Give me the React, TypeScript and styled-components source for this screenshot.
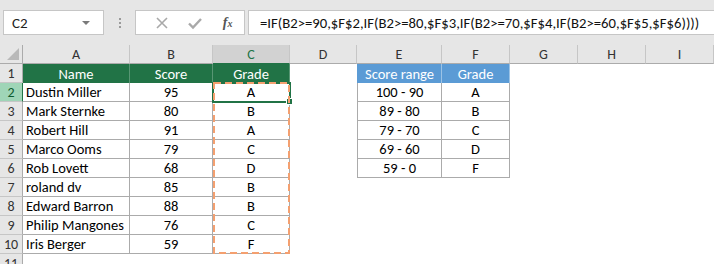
import React from 'react';
import styled, { createGlobalStyle, css } from 'styled-components';

const GlobalStyle = createGlobalStyle`
	html, body {
		margin: 0;
		padding: 0;
		background: #ffffff;
	}
	body {
		font-family: Carlito, 'Liberation Sans', Arial, sans-serif;
		overflow: hidden;
	}
`;

const XL_GREEN = '#217346';
const XL_BLUE = '#5b9bd5';
const GRID = '#ababab';
const HEAD_BG = '#e6e6e6';
const HEAD_LINE = '#c6c6c6';

const columns = [
	{ key: 'A', width: 107 },
	{ key: 'B', width: 83 },
	{ key: 'C', width: 77 },
	{ key: 'D', width: 67 },
	{ key: 'E', width: 85 },
	{ key: 'F', width: 68 },
	{ key: 'G', width: 68 },
	{ key: 'H', width: 68 },
	{ key: 'I', width: 68 },
];
const ROW_HEAD_W = 23;
const ROW_H = 19;

const people: [string, number, string][] = [
	['Dustin Miller', 95, 'A'],
	['Mark Sternke', 80, 'B'],
	['Robert Hill', 91, 'A'],
	['Marco Ooms', 79, 'C'],
	['Rob Lovett', 68, 'D'],
	['roland dv', 85, 'B'],
	['Edward Barron', 88, 'B'],
	['Philip Mangones', 76, 'C'],
	['Iris Berger', 59, 'F'],
];

const ranges: [string, string][] = [
	['100 - 90', 'A'],
	['89 - 80', 'B'],
	['79 - 70', 'C'],
	['69 - 60', 'D'],
	['59 - 0', 'F'],
];

/* ---------- formula bar ---------- */

const FormulaBar = styled.div`
	display: flex;
	align-items: flex-start;
	height: 45px;
	box-sizing: border-box;
	padding: 10px 0 0 3px;
	background: ${HEAD_BG};
`;

const Box = styled.div`
	display: flex;
	align-items: center;
	height: 25px;
	box-sizing: border-box;
	background: #ffffff;
	border: 1px solid ${HEAD_LINE};
`;

const NameBox = styled(Box)`
	width: 101px;
	padding: 0 0 0 8px;
	justify-content: space-between;
	font-size: 15px;
	color: #222;
`;

const DropArrow = styled.span`
	width: 0;
	height: 0;
	margin-right: 13px;
	border-left: 4px solid transparent;
	border-right: 4px solid transparent;
	border-top: 4px solid #7a7a7a;
`;

const Grip = styled.div`
	display: flex;
	flex-direction: column;
	justify-content: center;
	align-items: center;
	gap: 2px;
	width: 31px;
	height: 25px;
	span {
		width: 2px;
		height: 2px;
		background: #9a9a9a;
	}
`;

const ButtonBox = styled(Box)`
	width: 110px;
	padding: 0 0 0 10px;
`;

const IconSlot = styled.span`
	display: flex;
	align-items: center;
	justify-content: center;
	width: 36px;
	height: 23px;
`;

const Fx = styled.span`
	font-family: 'Liberation Serif', 'DejaVu Serif', serif;
	font-style: italic;
	font-weight: bold;
	font-size: 14px;
	color: #555;
	sub {
		font-size: 10px;
		vertical-align: 0;
	}
`;

const FormulaInput = styled(Box)`
	flex: 1;
	margin-left: 3px;
	padding-left: 11px;
	border-right: none;
	font-size: 14.7px;
	color: #111;
	white-space: nowrap;
	overflow: hidden;
`;

/* ---------- sheet ---------- */

const Sheet = styled.div`
	position: relative;
	display: grid;
	grid-template-columns: ${ROW_HEAD_W}px ${columns.map((c) => `${c.width}px`).join(' ')};
	grid-auto-rows: ${ROW_H}px;
	font-size: 14.5px;
`;

type CellKind = 'corner' | 'colHead' | 'rowHead' | 'green' | 'blue' | 'data' | 'blank';

const Cell = styled.div<{
	$kind: CellKind;
	$align?: 'left' | 'center';
	$active?: boolean;
	$edgeLeft?: boolean;
}>`
	display: flex;
	align-items: center;
	justify-content: ${(p) => (p.$align === 'left' ? 'flex-start' : 'center')};
	padding: ${(p) => (p.$align === 'left' ? '0 0 0 3px' : '0')};
	box-sizing: border-box;
	white-space: nowrap;
	overflow: hidden;
	color: #000;

	${(p) =>
		p.$kind === 'corner' &&
		css`
			position: relative;
			background: ${HEAD_BG};
			border-right: 1px solid ${GRID};
			border-bottom: 1px solid ${GRID};
			&::after {
				content: '';
				position: absolute;
				right: 3px;
				bottom: 3px;
				border-left: 12px solid transparent;
				border-bottom: 12px solid #b9b9b9;
			}
		`}

	${(p) =>
		p.$kind === 'colHead' &&
		css`
			background: ${p.$active ? '#d2d2d2' : HEAD_BG};
			color: ${p.$active ? XL_GREEN : '#333'};
			border-right: 1px solid ${HEAD_LINE};
			border-bottom: 1px solid ${p.$active ? XL_GREEN : GRID};
			font-size: 14px;
		`}

	${(p) =>
		p.$kind === 'rowHead' &&
		css`
			background: ${p.$active ? '#9fd5b7' : HEAD_BG};
			color: ${p.$active ? '#0e5c2f' : '#333'};
			border-right: 1px solid ${p.$active ? XL_GREEN : GRID};
			border-bottom: 1px solid ${HEAD_LINE};
			font-size: 14px;
		`}

	${(p) =>
		p.$kind === 'green' &&
		css`
			background: ${XL_GREEN};
			color: #fff;
			border-right: 1px solid rgba(255, 255, 255, 0.25);
		`}

	${(p) =>
		p.$kind === 'blue' &&
		css`
			background: ${XL_BLUE};
			color: #fff;
			border-right: 1px solid rgba(255, 255, 255, 0.4);
			border-left: ${p.$edgeLeft ? `1px solid ${XL_BLUE}` : 'none'};
		`}

	${(p) =>
		p.$kind === 'data' &&
		css`
			background: #fff;
			border-right: 1px solid ${GRID};
			border-bottom: 1px solid ${GRID};
			border-left: ${p.$edgeLeft ? `1px solid ${GRID}` : 'none'};
		`}

	${(p) =>
		p.$kind === 'blank' &&
		css`
			background: #fff;
		`}
`;

const Selection = styled.div`
	position: absolute;
	left: 212px;
	top: 37px;
	width: 79px;
	height: 21px;
	box-sizing: border-box;
	border: 2px solid ${XL_GREEN};
	pointer-events: none;
`;

const Handle = styled.div`
	position: absolute;
	right: -4px;
	bottom: -4px;
	width: 5px;
	height: 5px;
	background: ${XL_GREEN};
	border: 1px solid #fff;
`;

const Marquee = styled.svg`
	position: absolute;
	left: 212px;
	top: 37px;
	overflow: visible;
	pointer-events: none;
`;

type CellSpec = {
	kind: CellKind;
	text?: React.ReactNode;
	align?: 'left' | 'center';
	edgeLeft?: boolean;
};

function cellFor(row: number, col: string): CellSpec {
	// row 1 = table headers, rows 2..10 = data
	if (['A', 'B', 'C'].includes(col)) {
		if (row === 1) {
			return { kind: 'green', text: { A: 'Name', B: 'Score', C: 'Grade' }[col] };
		}
		const person = people[row - 2];
		if (person) {
			if (col === 'A') return { kind: 'data', text: person[0], align: 'left' };
			if (col === 'B') return { kind: 'data', text: person[1] };
			return { kind: 'data', text: person[2] };
		}
	}
	if (col === 'E' || col === 'F') {
		if (row === 1) {
			return { kind: 'blue', text: col === 'E' ? 'Score range' : 'Grade', edgeLeft: col === 'E' };
		}
		const range = ranges[row - 2];
		if (range) {
			return { kind: 'data', text: col === 'E' ? range[0] : range[1], edgeLeft: col === 'E' };
		}
	}
	return { kind: 'blank' };
}

const CheckIcon = () => (
	<svg width="16" height="14" viewBox="0 0 16 14">
		<polyline points="2,7.5 6,11.5 14,3" fill="none" stroke="#a9a9a9" strokeWidth="2.4" />
	</svg>
);

const CrossIcon = () => (
	<svg width="14" height="14" viewBox="0 0 14 14">
		<path d="M2 2 L12 12 M12 2 L2 12" stroke="#a9a9a9" strokeWidth="1.6" fill="none" />
	</svg>
);

const marqueeHeight = ROW_H * 9;

export default function App() {
	const sheetRows = Array.from({ length: 11 }, (_, i) => i + 1);
	return (
		<>
			<GlobalStyle />
			<FormulaBar>
				<NameBox>
					C2
					<DropArrow />
				</NameBox>
				<Grip>
					<span />
					<span />
					<span />
				</Grip>
				<ButtonBox>
					<IconSlot>
						<CrossIcon />
					</IconSlot>
					<IconSlot>
						<CheckIcon />
					</IconSlot>
					<IconSlot>
						<Fx>
							f<sub>x</sub>
						</Fx>
					</IconSlot>
				</ButtonBox>
				<FormulaInput>=IF(B2&gt;=90,$F$2,IF(B2&gt;=80,$F$3,IF(B2&gt;=70,$F$4,IF(B2&gt;=60,$F$5,$F$6))))</FormulaInput>
			</FormulaBar>
			<Sheet>
				<Cell $kind="corner" />
				{columns.map((c) => (
					<Cell key={c.key} $kind="colHead" $active={c.key === 'C'}>
						{c.key}
					</Cell>
				))}
				{sheetRows.map((r) => (
					<React.Fragment key={r}>
						<Cell $kind="rowHead" $active={r === 2}>
							{r}
						</Cell>
						{columns.map((c) => {
							const spec = cellFor(r, c.key);
							return (
								<Cell key={c.key} $kind={spec.kind} $align={spec.align} $edgeLeft={spec.edgeLeft}>
									{spec.text}
								</Cell>
							);
						})}
					</React.Fragment>
				))}
				<Selection>
					<Handle />
				</Selection>
				<Marquee width={79} height={marqueeHeight + 1}>
					<rect
						x={2}
						y={1}
						width={75}
						height={marqueeHeight - 1}
						fill="none"
						stroke="#f4a070"
						strokeWidth={2}
						strokeDasharray="7 4"
					/>
				</Marquee>
			</Sheet>
		</>
	);
}
